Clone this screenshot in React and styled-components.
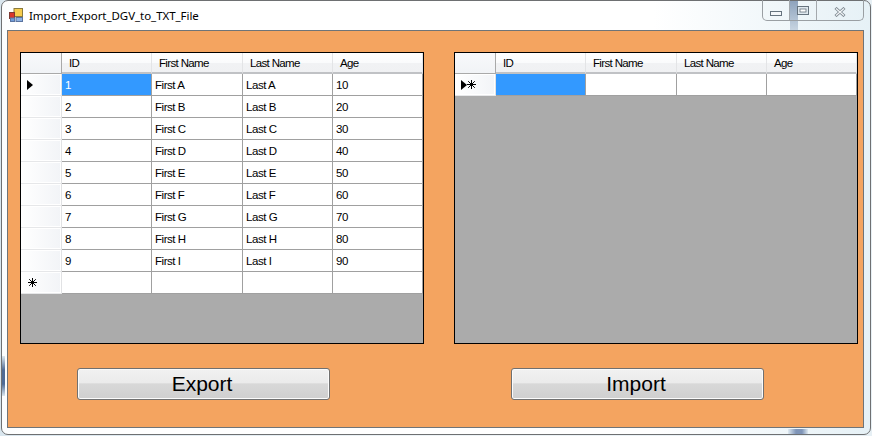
import React from "react";
import styled, { createGlobalStyle } from "styled-components";

const Global = createGlobalStyle`
  html, body { margin: 0; padding: 0; background: #eaf2f6; overflow: hidden; }
  * { box-sizing: border-box; }
`;

const Desktop = styled.div`
  width: 872px;
  height: 436px;
  padding: 0 0 1px 1px;
  background: linear-gradient(90deg, #d9e6ee, #eef4f7 50%, #e6eff4);
`;

const Window = styled.div`
  width: 870px;
  height: 435px;
  padding: 0 6px 6px 5px;
  display: flex;
  flex-direction: column;
  background:
    linear-gradient(180deg, #8ea3bd, #c9d6e2) 788px 0 / 8px 30px no-repeat,
    linear-gradient(180deg, #dce8ef, #4f6c96 35%, #4f6c96 70%, #dce8ef) 0 355px / 3px 40px no-repeat,
    linear-gradient(90deg, #dfeaf1, #7f95b8 40%, #7f95b8 70%, #dfeaf1) 786px 428px / 20px 6px no-repeat,
    linear-gradient(90deg, #fbfdfe, #fff 20px, #fff 75%, #e6f1f6),
    #fff;
  border: 1px solid #6e7072;
  border-radius: 7px;
`;

const TitleBar = styled.div`
  height: 29px;
  flex: none;
  display: flex;
  align-items: flex-start;
  justify-content: space-between;
`;

const TitleLeft = styled.div`
  display: flex;
  align-items: center;
  gap: 6px;
  height: 29px;
  padding: 0 0 1px 2px;
`;

const Title = styled.span`
  font: 11.5px "Noto Sans", sans-serif;
  color: #000;
  letter-spacing: -0.05px;
`;

const Controls = styled.div`
  display: flex;
  height: 21px;
  width: 102px;
  margin-top: -1px;
  border: 1px solid #9a9fa3;
  border-top: none;
  border-radius: 0 0 5px 5px;
`;

const ControlBtn = styled.div`
  flex: ${(p) => p.$flex};
  display: flex;
  align-items: center;
  justify-content: center;
  padding-top: ${(p) => p.$top}px;
  & + & { border-left: 1px solid #a4a9ad; }
`;

const Client = styled.main`
  flex: 1;
  display: flex;
  flex-direction: column;
  padding: 21px 5px 0 12px;
  background: #f4a460;
  border: 1px solid #6f7478;
`;

const Panels = styled.div`
  display: flex;
  gap: 30px;
`;

const GridFrame = styled.div`
  width: 404px;
  height: 292px;
  background: #ababab;
  border: 1px solid #000;
`;

const Table = styled.div`
  display: grid;
  grid-template-columns: 41px 90px 91px 90px 90px;
  grid-auto-rows: 22px;
  grid-template-rows: 21px;
`;

const Corner = styled.div`
  background: linear-gradient(180deg, #f8f9fb, #f1f3f6);
  border-right: 1px solid #a9a9a9;
  border-bottom: 1px solid #a9a9a9;
`;

const Head = styled.div`
  display: flex;
  align-items: center;
  padding: 1px 0 0 7px;
  font: 11.5px "Liberation Sans", Arial, sans-serif;
  letter-spacing: -0.65px;
  color: #000;
  background: linear-gradient(180deg, #ffffff, #fafbfc 50%, #f1f2f4 52%, #f0f1f3);
  border-right: 1px solid #e3e4e6;
  border-bottom: 2px solid #c0c2c5;
`;

const RowHead = styled.div`
  display: flex;
  align-items: center;
  padding-left: ${(p) => p.$pad || 6}px;
  background: linear-gradient(90deg, #fff, #f2f4f7);
  border-right: 1px solid #e1e2e4;
  border-bottom: 1px solid #e6e7e9;
  box-shadow: inset 0 0 0 1px #fff;
`;

const Cell = styled.div`
  display: flex;
  align-items: center;
  padding: 1px 0 0 3px;
  font: 11.5px "Liberation Sans", Arial, sans-serif;
  letter-spacing: -0.45px;
  color: ${(p) => (p.$selected ? "#fff" : "#000")};
  background: ${(p) => (p.$selected ? "#3399ff" : "#fff")};
  border-right: 1px solid #a0a0a0;
  border-bottom: 1px solid #a0a0a0;
`;

const Actions = styled.div`
  display: flex;
  padding: 24px 0 0 57px;
  gap: 181px;
`;

const Button = styled.button`
  width: 253px;
  height: 32px;
  padding: 0 3px 0 0;
  font: 21px "Liberation Sans", Arial, sans-serif;
  color: #000;
  background: linear-gradient(180deg, #f1f1f1, #ebebeb 45%, #d8d8d8 50%, #cfcfcf);
  border: 1px solid #707070;
  border-radius: 3px;
  box-shadow: inset 0 0 0 1px #fbfbfb;
`;

const Arrow = () => (
  <svg width="6" height="10" viewBox="0 0 6 10"><path d="M0 0 L6 5 L0 10Z" fill="#000" /></svg>
);

const Star = () => (
  <svg width="9" height="9" viewBox="0 0 9 9" stroke="#000" strokeWidth="1">
    <path d="M4.5 0V9M0 4.5H9M1.2 1.2L7.8 7.8M7.8 1.2L1.2 7.8" />
  </svg>
);

const AppIcon = () => (
  <svg width="14" height="14" viewBox="0 0 14 14">
    <rect x="5" y="0.5" width="8.5" height="8" fill="#f6cc4e" stroke="#8a7a3c" />
    <rect x="0.5" y="4.5" width="5" height="6" fill="#d8362a" stroke="#7d3a34" />
    <rect x="1.5" y="10" width="4" height="3.5" fill="#6d9ad8" stroke="#5a74a0" />
    <rect x="7" y="9.5" width="6.5" height="4" fill="#8fb2e2" stroke="#5a74a0" />
  </svg>
);

const MinIcon = () => (
  <svg width="12" height="5" viewBox="0 0 12 5"><rect x="0.5" y="0.5" width="11" height="4" fill="#f4f7f9" stroke="#66737e" /></svg>
);
const MaxIcon = () => (
  <svg width="12" height="9" viewBox="0 0 12 9"><rect x="0.5" y="0.5" width="11" height="8" fill="#dfe8ee" stroke="#66737e" /><rect x="3" y="3" width="6" height="3" fill="#fff" stroke="#66737e" strokeWidth="0.8" /></svg>
);
const CloseIcon = () => (
  <svg width="12" height="10" viewBox="0 0 12 10">
    <path d="M1.5 1L10.5 9M10.5 1L1.5 9" stroke="#7d8890" strokeWidth="3" fill="none" />
    <path d="M2 1.5L10 8.5M10 1.5L2 8.5" stroke="#f4f7f9" strokeWidth="1.2" fill="none" />
  </svg>
);

const HEADERS = ["ID", "First Name", "Last Name", "Age"];
const ROWS = "ABCDEFGHI".split("").map((l, i) => [String(i + 1), `First ${l}`, `Last ${l}`, String((i + 1) * 10)]);

const DataGrid = ({ rows }) => (
  <GridFrame>
    <Table>
      <Corner />
      {HEADERS.map((h) => <Head key={h}>{h}</Head>)}
      {rows.map((r, i) => (
        <React.Fragment key={r[0]}>
          <RowHead>{i === 0 && <Arrow />}</RowHead>
          {r.map((v, j) => <Cell key={j} $selected={i === 0 && j === 0}>{v}</Cell>)}
        </React.Fragment>
      ))}
      <RowHead $pad={rows.length ? 7 : 6}>
        {!rows.length && <Arrow />}
        <Star />
      </RowHead>
      {HEADERS.map((h, j) => <Cell key={h} $selected={!rows.length && j === 0} />)}
    </Table>
  </GridFrame>
);

export default function App() {
  return (
    <Desktop>
      <Global />
      <Window>
        <TitleBar>
          <TitleLeft>
            <AppIcon />
            <Title>Import_Export_DGV_to_TXT_File</Title>
          </TitleLeft>
          <Controls>
            <ControlBtn $flex="27" $top={6}><MinIcon /></ControlBtn>
            <ControlBtn $flex="27" $top={1}><MaxIcon /></ControlBtn>
            <ControlBtn $flex="48" $top={3}><CloseIcon /></ControlBtn>
          </Controls>
        </TitleBar>
        <Client>
          <Panels>
            <DataGrid rows={ROWS} />
            <DataGrid rows={[]} />
          </Panels>
          <Actions>
            <Button>Export</Button>
            <Button>Import</Button>
          </Actions>
        </Client>
      </Window>
    </Desktop>
  );
}
